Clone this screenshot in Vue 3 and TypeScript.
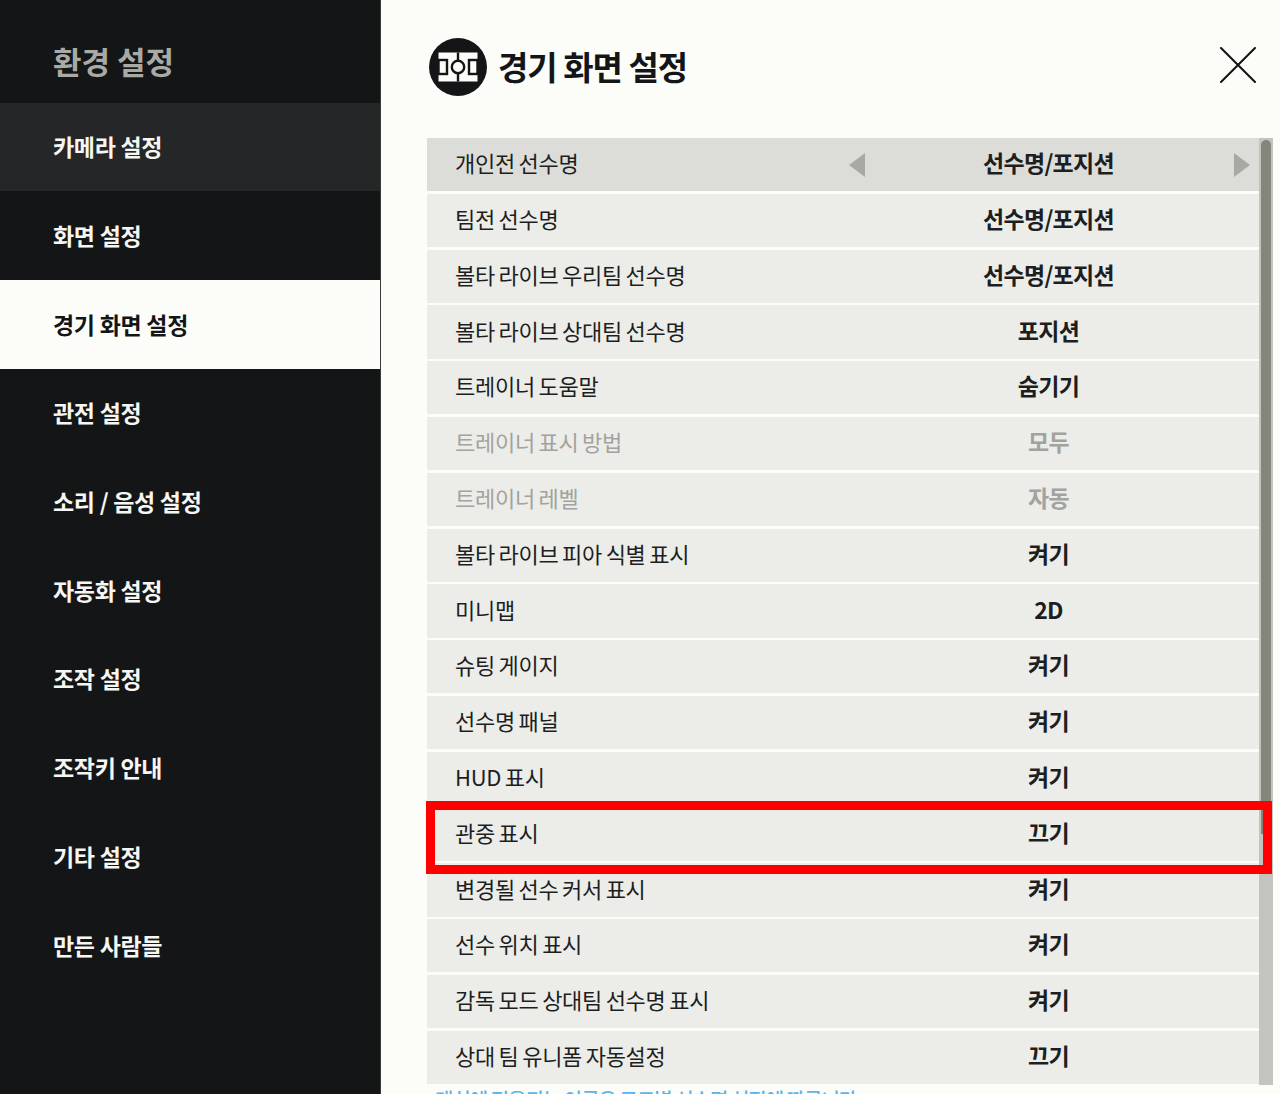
<script setup lang="ts">
const nav = ['카메라 설정', '화면 설정', '경기 화면 설정', '관전 설정', '소리 / 음성 설정', '자동화 설정', '조작 설정', '조작키 안내', '기타 설정', '만든 사람들']
const rows = [
  ['개인전 선수명', '선수명/포지션'],
  ['팀전 선수명', '선수명/포지션'],
  ['볼타 라이브 우리팀 선수명', '선수명/포지션'],
  ['볼타 라이브 상대팀 선수명', '포지션'],
  ['트레이너 도움말', '숨기기'],
  ['트레이너 표시 방법', '모두'],
  ['트레이너 레벨', '자동'],
  ['볼타 라이브 피아 식별 표시', '켜기'],
  ['미니맵', '2D'],
  ['슈팅 게이지', '켜기'],
  ['선수명 패널', '켜기'],
  ['HUD 표시', '켜기'],
  ['관중 표시', '끄기'],
  ['변경될 선수 커서 표시', '켜기'],
  ['선수 위치 표시', '켜기'],
  ['감독 모드 상대팀 선수명 표시', '켜기'],
  ['상대 팀 유니폼 자동설정', '끄기'],
]
</script>

<template>
  <div class="page">
    <aside class="side">
      <h2 class="side-title">환경 설정</h2>
      <div
        v-for="(n, i) in nav"
        :key="n"
        class="nav"
        :class="{ hover: i === 0, active: i === 2 }"
      >{{ n }}</div>
    </aside>
    <main class="main">
      <header class="head">
        <svg class="logo" width="58" height="58" viewBox="0 0 58 58">
          <circle cx="29" cy="29" r="29" fill="#141517" />
          <rect x="9.5" y="14.5" width="39" height="29" fill="#fcfdf8" />
          <g fill="none" stroke="#141517" stroke-width="2.4">
            <path d="M29 14.5V43.5" />
            <circle cx="29" cy="29" r="6.2" fill="#fcfdf8" />
            <rect x="9.5" y="22" width="8.5" height="14" />
            <rect x="40" y="22" width="8.5" height="14" />
          </g>
        </svg>
        <h1 class="title">경기 화면 설정</h1>
        <svg class="close" width="36" height="36" viewBox="0 0 36 36">
          <path d="M1 1L35 35M35 1L1 35" stroke="#111" stroke-width="2" stroke-linecap="round" />
        </svg>
      </header>
      <div class="list-wrap">
        <div class="list">
          <div
            v-for="(r, i) in rows"
            :key="r[0]"
            class="row"
            :class="{ first: i === 0, dim: i === 5 || i === 6 }"
          >
            <span class="label">{{ r[0] }}</span>
            <span class="value">
              <svg v-if="i === 0" class="arrow prev" width="16" height="24" viewBox="0 0 16 24"><path d="M16 0V24L0 12Z" /></svg>
              <span class="value-text">{{ r[1] }}</span>
              <svg v-if="i === 0" class="arrow next" width="16" height="24" viewBox="0 0 16 24"><path d="M0 0V24L16 12Z" /></svg>
            </span>
          </div>
        </div>
        <div class="track"><div class="thumb"></div></div>
      </div>
      <p class="note">매치에 적용되는 이름은 모드별 선수명 설정에 따릅니다.</p>
      <div class="highlight"></div>
    </main>
  </div>
</template>

<style scoped>
.page {
  display: flex;
  width: 1280px;
  height: 1094px;
  overflow: hidden;
  font-family: "Noto Sans CJK KR", "Noto Sans", sans-serif;
  background: #fcfdf8;
}
.side {
  width: 380px;
  flex: none;
  background: #141517;
  border-right: 1px solid #3a3a3a;
  box-sizing: content-box;
}
.side-title {
  margin: 0;
  height: 102.5px;
  box-sizing: border-box;
  padding: 19px 0 0 53px;
  display: flex;
  align-items: center;
  color: #a9aaa3;
  font-size: 31px;
  font-weight: 700;
  letter-spacing: 0;
}
.nav {
  height: 88.7px;
  padding: 0 0 1px 53px;
  box-sizing: border-box;
  display: flex;
  align-items: center;
  color: #f6f6f2;
  font-size: 23px;
  font-weight: 700;
  letter-spacing: -0.3px;
}
.nav.hover {
  background: #252627;
}
.nav.active {
  background: #fcfdf8;
  color: #141517;
}
.main {
  position: relative;
  flex: 1;
  min-width: 0;
  padding: 0 5px 0 46px;
}
.head {
  height: 138px;
  display: flex;
  align-items: center;
  padding-bottom: 4px;
  box-sizing: border-box;
}
.logo {
  flex: none;
  margin-left: 2px;
}
.title {
  margin: 0 0 0 11px;
  padding-bottom: 2px;
  flex: 1;
  font-size: 33px;
  font-weight: 700;
  color: #141517;
  letter-spacing: -1px;
}
.close {
  flex: none;
  margin: 0 19px 5px 0;
}
.list-wrap {
  display: flex;
  height: 947px;
}
.list {
  width: 832px;
  flex: none;
}
.row {
  height: 53.3px;
  margin-bottom: 2.5px;
  display: flex;
  align-items: center;
  background: #ecede8;
  color: #1d1e1f;
  font-size: 22px;
  letter-spacing: -0.28px;
  word-spacing: -1px;
}
.row.first {
  background: #dcddd8;
}
.row.dim {
  color: #a2a39e;
}
.label {
  flex: none;
  width: 422px;
  padding: 0 0 5px 28px;
  box-sizing: border-box;
}
.value {
  flex: none;
  width: 401px;
  display: grid;
  grid-template-columns: 16px 1fr 16px;
  align-items: center;
  font-size: 23px;
  font-weight: 700;
  letter-spacing: -0.7px;
}
.value-text {
  grid-column: 2;
  text-align: center;
  padding: 0 2px 5px 0;
}
.arrow {
  fill: #a8a9a3;
}
.prev {
  grid-column: 1;
  grid-row: 1;
}
.next {
  grid-column: 3;
  grid-row: 1;
}
.track {
  width: 14px;
  flex: none;
  background: #c3c4bd;
  display: flex;
  justify-content: center;
  padding-top: 2px;
  box-sizing: border-box;
}
.thumb {
  width: 10px;
  height: 694px;
  background: #858679;
  border-radius: 5px 5px 0 0;
}
.note {
  margin: 0 0 0 8px;
  font-size: 20px;
  line-height: 30px;
  font-weight: 500;
  color: #5ab4ee;
  white-space: nowrap;
  letter-spacing: -1px;
}
.highlight {
  position: absolute;
  left: 45px;
  top: 801px;
  width: 846px;
  height: 73px;
  box-sizing: border-box;
  border: 9px solid #ff0000;
}
</style>
